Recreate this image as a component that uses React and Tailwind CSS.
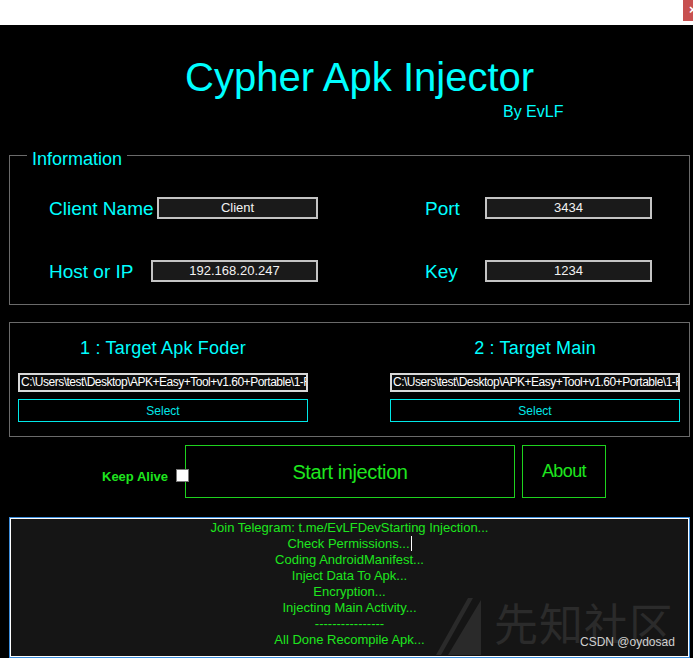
import React from "react";

const logLines = [
  "Join Telegram: t.me/EvLFDevStarting Injection...",
  "Check Permissions...",
  "Coding AndroidManifest...",
  "Inject Data To Apk...",
  "Encryption...",
  "Injecting Main Activity...",
  "----------------",
  "All Done Recompile Apk...",
];

const path = "C:\\Users\\test\\Desktop\\APK+Easy+Tool+v1.60+Portable\\1-Run\\apk";

function Field({ value, className }) {
  return (
    <div
      className={`h-[22px] border-2 border-[#c4c4c4] bg-[#1a1a1a] text-[13px] leading-[18px] text-[#f2f2f2] text-center ${className}`}
    >
      {value}
    </div>
  );
}

function TargetColumn({ title }) {
  return (
    <div className="w-[290px] flex flex-col">
      <div className="text-[18px] leading-[18px] text-[#00ffff] text-center tracking-[0.2px]">{title}</div>
      <div className="mt-[16px] h-[19px] border-2 border-[#d8d8d8] bg-[#0c0c0c] overflow-hidden whitespace-nowrap text-[12px] leading-[15px] text-white pl-[1px] tracking-[-0.5px]">
        {path}
      </div>
      <button className="mt-[7px] h-[23px] border border-[#00e8e8] text-[12px] text-[#00e8e8] text-center">
        Select
      </button>
    </div>
  );
}

export default function App() {
  return (
    <div
      className="w-[693px] h-[658px] bg-black overflow-hidden"
      style={{ fontFamily: '"Liberation Sans", Arial, sans-serif' }}
    >
      {/* window strip */}
      <div className="h-[25px] bg-white flex justify-end">
        <div className="w-[10px] h-[21px] bg-[#c75050] overflow-hidden text-white text-[13px] leading-[20px] font-bold pl-[6px]">
          ×
        </div>
      </div>

      {/* title */}
      <div className="pl-[185px] mt-[32px] text-[40px] leading-[40px] text-[#00ffff]">
        Cypher Apk Injector
      </div>
      <div className="pl-[503px] mt-[7px] text-[16px] leading-[16px] text-[#00ffff]">By EvLF</div>

      {/* information group */}
      <div className="relative mt-[35px] ml-[9px] w-[681px] h-[150px] border border-[#6a6a6a] pt-[41px]">
        <span className="absolute -top-[6px] left-[17px] px-[5px] bg-black text-[18px] leading-[18px] text-[#00ffff]">
          Information
        </span>
        <div className="flex items-center">
          <div className="w-[308px] pl-[39px] flex items-center justify-between">
            <span className="text-[19px] leading-[19px] text-[#00ffff]">Client Name</span>
            <Field value="Client" className="w-[161px] h-[21px]" />
          </div>
          <div className="ml-[107px] w-[60px] text-[19px] leading-[19px] text-[#00ffff]">Port</div>
          <Field value="3434" className="w-[167px] h-[21px]" />
        </div>
        <div className="flex items-center mt-[41px]">
          <div className="w-[308px] pl-[39px] flex items-center justify-between">
            <span className="text-[19px] leading-[19px] text-[#00ffff]">Host or IP</span>
            <Field value="192.168.20.247" className="w-[167px]" />
          </div>
          <div className="ml-[107px] w-[60px] text-[19px] leading-[19px] text-[#00ffff]">Key</div>
          <Field value="1234" className="w-[167px]" />
        </div>
      </div>

      {/* targets group */}
      <div className="mt-[17px] ml-[9px] w-[681px] h-[115px] border border-[#6a6a6a] pt-[16px] pl-[8px] pr-[9px] flex justify-between">
        <TargetColumn title="1 : Target Apk Foder" />
        <TargetColumn title="2 : Target Main" />
      </div>

      {/* actions */}
      <div className="mt-[8px] pl-[102px] flex items-center">
        <span className="mt-[9px] text-[13px] leading-[13px] font-bold text-[#1ee61e]">Keep Alive</span>
        <span className="relative z-10 mt-[7px] ml-[8px] -mr-[4px] w-[13px] h-[13px] bg-white border border-[#777]" />
        <button className="w-[330px] h-[53px] border border-[#1ed21e] text-[20px] text-[#1ee61e] tracking-[-0.4px]">
          Start injection
        </button>
        <button className="ml-[7px] w-[84px] h-[53px] border border-[#1ed21e] text-[18px] text-[#1ee61e] tracking-[-0.6px]">
          About
        </button>
      </div>

      {/* log */}
      <div className="relative mt-[19px] ml-[9px] w-[681px] h-[141px] border border-[#3c8ddc] bg-[#151515] shadow-[inset_0_0_0_1px_#ffffff] pt-[2px] text-center text-[13px] leading-[16px] text-[#1ee61e]">
        {logLines.map((line, i) => (
          <div key={i}>
            {line}
            {i === 1 && <span className="inline-block w-[1px] h-[15px] bg-white align-[-3px] ml-[1px]" />}
          </div>
        ))}

        <svg className="absolute left-[426px] top-[80px]" width="46" height="57" viewBox="0 0 46 57">
          <polygon points="0,57 32,0 37,0 5,57" fill="#2a2a2a" />
          <polygon points="12,57 45,2 45,57" fill="#2a2a2a" />
        </svg>
        <span
          className="absolute left-[484px] top-[82px] text-[44px] leading-[44px] text-[#2b2b2b] tracking-[1px]"
          style={{ fontFamily: '"Noto Sans CJK SC", sans-serif' }}
        >
          先知社区
        </span>
        <span className="absolute left-[570px] top-[118px] text-[12px] leading-[12px] text-[#cfcfcf]">
          CSDN @oydosad
        </span>
      </div>
    </div>
  );
}
